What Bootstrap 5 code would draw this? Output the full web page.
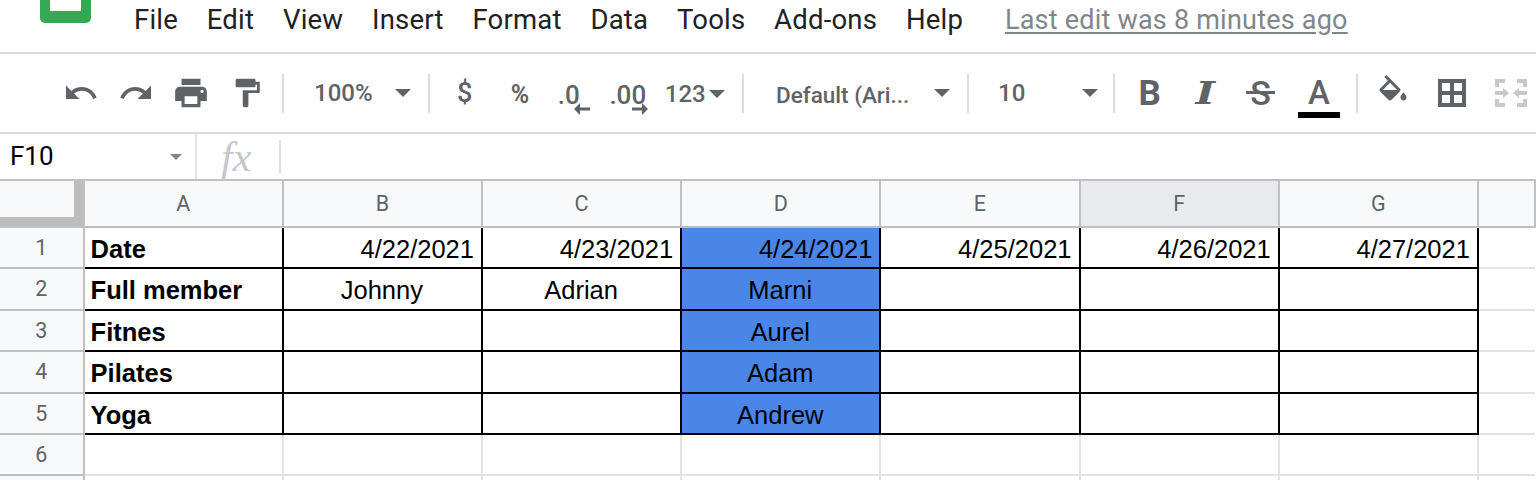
<!DOCTYPE html>
<html lang="en">
<head>
  <meta charset="UTF-8">
  <meta name="viewport" content="width=device-width, initial-scale=1.0">
  <title>Schedule - Google Sheets</title>
  <link href="https://cdn.jsdelivr.net/npm/bootstrap@5.3.3/dist/css/bootstrap.min.css" rel="stylesheet">
  <style>
    html, body { height: 481px; overflow: hidden; background: #fff; }
    body { font-family: Roboto, "Liberation Sans", sans-serif; color: #202124; }

    /* menu bar */
    .menu-bar { height: 54px; border-bottom: 2px solid #dadce0; overflow: hidden; }
    .sheet-logo { width: 51px; height: 50px; margin: -27px 0 0 40px; background: #34a853; border-radius: 5px; padding: 0 10px; flex: none; }
    .sheet-logo i { display: block; height: 38px; background: #fff; }
    .menu-items { margin-left: 43px; gap: 28.8px; font-size: 27.5px; line-height: 40px; letter-spacing: .2px; white-space: nowrap; }
    .last-edit { color: #80868b; font-size: 27px; text-decoration: underline; text-underline-offset: 3px; margin-left: 13px; letter-spacing: .22px; }

    /* toolbar */
    .tool-bar { height: 80px; padding-left: 53px; border-bottom: 2px solid #dadce0; color: #5f6368; overflow: hidden; }
    .tool-btn { width: 55.4px; height: 40px; flex: none; display: flex; align-items: center; justify-content: center; }
    .tool-sep { width: 2px; height: 39px; background: #dadce0; flex: none; }
    .tool-sec { flex: none; height: 40px; display: flex; align-items: center; }
    .sec-history { width: 229px; }
    .sec-zoom { width: 144px; padding: 0 17px 0 30px; justify-content: space-between; }
    .sec-number { width: 312px; padding-left: 7px; }
    .sec-font { width: 223px; padding: 0 17px 0 32px; justify-content: space-between; }
    .sec-size { width: 144px; padding: 0 15px 0 29px; justify-content: space-between; }
    .sec-style { width: 241px; padding-left: 7px; }
    .sec-cell { padding-left: 7px; }
    .tool-text { font-size: 24px; font-weight: 500; line-height: 1; white-space: nowrap; }
    .caret-down { width: 0; height: 0; border: 8px solid transparent; border-top-color: #5f6368; border-bottom: 0; flex: none; }
    .glyph-dollar { font-size: 27px; }
    .glyph-percent { font-size: 25px; font-weight: 700; margin-top: 2px; }
    .decimal-btn { position: relative; }
    .decimal-btn .tool-text { font-size: 26px; margin-top: 4px; }
    .decimal-btn svg { position: absolute; }
    .arrow-less { right: 4px; bottom: -2px; }
    .arrow-more { right: 14px; bottom: -2px; }
    .sec-number .tool-btn:nth-child(3) { width: 50px; margin-left: -4px; }
    .sec-number .tool-btn:nth-child(4) { width: 68px; }
    .num-fmt { padding-left: 3px; gap: 3px; justify-content: flex-start; margin-top: 2px; }
    .font-name { font-size: 22.5px; margin-top: 4px; }
    .glyph-bold { font-size: 35px; font-weight: 700; }
    .glyph-italic { font-family: "DejaVu Serif", serif; font-size: 31px; font-weight: 700; font-style: italic; transform: scaleX(1.35); }
    .glyph-strike { font-size: 34px; font-weight: 500; position: relative; }
    .glyph-strike::after { content: ""; position: absolute; left: -4px; right: -4px; top: 15px; height: 3px; background: #5f6368; }
    .color-a { display: flex; flex-direction: column; align-items: center; margin: 10px 0 0 3px; }
    .color-a span { font-size: 33px; line-height: 30px; font-weight: 500; }
    .color-a i { display: block; width: 42px; height: 8px; background: #000; margin-top: 4px; }

    /* formula bar */
    .formula-bar { height: 47px; border-bottom: 2px solid #c0c0c0; }
    .name-box { width: 197px; height: 100%; padding: 0 13px 0 10px; border-right: 2px solid #e3e4e6; font-size: 26px; color: #000; flex: none; }
    .name-box .caret-down { border-width: 6px; border-bottom: 0; border-top-color: #80868b; }
    .fx-label { width: 82px; flex: none; padding-left: 24px; font-family: "Liberation Serif", serif; font-style: italic; font-size: 42px; line-height: 44px; color: #c4c7cb; }
    .fx-sep { width: 2px; height: 33px; flex: none; background: #dadce0; }

    /* grid */
    .sheet-grid { table-layout: fixed; width: 1536px; border-collapse: collapse; font-family: "Liberation Sans", Arial, sans-serif; font-size: 25.5px; color: #000; }
    .sheet-grid col.row-col { width: 83.6px; }
    .sheet-grid col.data-col { width: 199.2px; }
    .sheet-grid col.rest-col { width: auto; }
    .sheet-grid th, .sheet-grid td { height: 41.4px; padding: 4px 7px 0 6px; line-height: 1; border: 2px solid #e2e3e3; white-space: nowrap; overflow: hidden; }
    .sheet-grid thead th { height: 46px; padding: 0; background: #f8f9fa; border: 2px solid #c0c0c0; border-top: 0; font-family: Roboto, sans-serif; font-weight: 400; font-size: 21.5px; color: #5f6368; text-align: center; }
    .sheet-grid thead th.col-active { background: #e8eaed; }
    .sheet-grid thead th.col-corner { position: relative; border-left: 0; }
    .col-corner::after { content: ""; position: absolute; right: 0; bottom: 0; width: 100%; height: 100%; border-right: 9px solid #bdbdbd; border-bottom: 9px solid #bdbdbd; }
    .sheet-grid tbody th { padding: 0; background: #f8f9fa; border: 2px solid #c0c0c0; border-left: 0; font-family: Roboto, sans-serif; font-weight: 400; font-size: 21.5px; color: #5f6368; text-align: center; }
    .sheet-grid td.cell-box { border-color: #000; }
    .sheet-grid td.cell-head { font-weight: 700; }
    .sheet-grid td.cell-date { text-align: right; }
    .sheet-grid td.cell-name { text-align: center; }
    .sheet-grid td.cell-blue { background: #4a86e8; }
    .sheet-grid td.cell-rest { border-left: 0; border-right: 0; }
    .sheet-grid .row-sliver th, .sheet-grid .row-sliver td { height: 5px; padding: 0; border-bottom: 0; }
  </style>
</head>
<body>

  <!-- Menu bar -->
  <div class="menu-bar d-flex align-items-start">
    <div class="sheet-logo"><i></i></div>
    <div class="menu-items d-flex">
      <span>File</span><span>Edit</span><span>View</span><span>Insert</span><span>Format</span><span>Data</span><span>Tools</span><span>Add-ons</span><span>Help</span>
      <span class="last-edit">Last edit was 8 minutes ago</span>
    </div>
  </div>

  <!-- Toolbar -->
  <div class="tool-bar d-flex align-items-center">
    <div class="tool-sec sec-history">
      <div class="tool-btn"><svg width="36" height="36" viewBox="0 0 24 24" fill="#5f6368"><path d="M12.5 8c-2.65 0-5.05.99-6.9 2.6L2 7v9h9l-3.62-3.62c1.39-1.16 3.16-1.88 5.12-1.88 3.54 0 6.55 2.31 7.6 5.5l2.37-.78C21.08 11.03 17.15 8 12.5 8z"/></svg></div>
      <div class="tool-btn"><svg width="36" height="36" viewBox="0 0 24 24" fill="#5f6368"><path d="M18.4 10.6C16.55 8.99 14.15 8 11.5 8c-4.65 0-8.58 3.03-9.96 7.22L3.9 16c1.05-3.19 4.05-5.5 7.6-5.5 1.95 0 3.73.72 5.12 1.88L13 16h9V7l-3.6 3.6z"/></svg></div>
      <div class="tool-btn"><svg width="38" height="38" viewBox="0 0 24 24" fill="#5f6368"><path d="M19 8H5c-1.66 0-3 1.34-3 3v6h4v4h12v-4h4v-6c0-1.66-1.34-3-3-3zm-3 11H8v-5h8v5zm3-7c-.55 0-1-.45-1-1s.45-1 1-1 1 .45 1 1-.45 1-1 1zm-1-9H6v4h12V3z"/></svg></div>
      <div class="tool-btn"><svg width="34" height="34" viewBox="0 0 24 24" fill="#5f6368"><path d="M18 4V3c0-.55-.45-1-1-1H5c-.55 0-1 .45-1 1v4c0 .55.45 1 1 1h12c.55 0 1-.45 1-1V6h1v4H9v11c0 .55.45 1 1 1h2c.55 0 1-.45 1-1v-9h8V4h-3z"/></svg></div>
    </div>
    <div class="tool-sep"></div>
    <div class="tool-sec sec-zoom"><span class="tool-text">100%</span><span class="caret-down"></span></div>
    <div class="tool-sep"></div>
    <div class="tool-sec sec-number">
      <div class="tool-btn"><span class="tool-text glyph-dollar">$</span></div>
      <div class="tool-btn"><span class="tool-text glyph-percent">%</span></div>
      <div class="tool-btn decimal-btn"><span class="tool-text">.0</span>
        <svg class="arrow-less" width="16" height="12" viewBox="0 0 16 12" fill="#5f6368"><path d="M0 6 6 0v4.500h10v3H6V12z"/></svg></div>
      <div class="tool-btn decimal-btn"><span class="tool-text">.00</span>
        <svg class="arrow-more" width="16" height="12" viewBox="0 0 16 12" fill="#5f6368"><path d="M16 6 10 0v4.500H0v3h10V12z"/></svg></div>
      <div class="tool-btn num-fmt"><span class="tool-text">123</span><span class="caret-down"></span></div>
    </div>
    <div class="tool-sep"></div>
    <div class="tool-sec sec-font"><span class="tool-text font-name">Default (Ari...</span><span class="caret-down"></span></div>
    <div class="tool-sep"></div>
    <div class="tool-sec sec-size"><span class="tool-text">10</span><span class="caret-down"></span></div>
    <div class="tool-sep"></div>
    <div class="tool-sec sec-style">
      <div class="tool-btn"><span class="tool-text glyph-bold">B</span></div>
      <div class="tool-btn"><span class="tool-text glyph-italic">I</span></div>
      <div class="tool-btn"><span class="tool-text glyph-strike">S</span></div>
      <div class="tool-btn color-a"><span>A</span><i></i></div>
    </div>
    <div class="tool-sep"></div>
    <div class="tool-sec sec-cell">
      <div class="tool-btn"><svg width="36" height="36" viewBox="0 0 24 24" fill="#5f6368"><path d="M16.560 8.940 7.620 0 6.210 1.410l2.380 2.380-5.150 5.150c-.59.59-.59 1.540 0 2.120l5.500 5.500c.29.29.68.44 1.060.44s.77-.15 1.060-.44l5.500-5.500c.59-.58.59-1.530 0-2.120zM5.210 10 10 5.210 14.790 10H5.210zM19 11.500s-2 2.170-2 3.500c0 1.100.9 2 2 2s2-.9 2-2c0-1.330-2-3.500-2-3.500z"/></svg></div>
      <div class="tool-btn ms-1"><svg width="28" height="28" viewBox="0 0 14 14" fill="#5f6368"><path d="M0 0v14h14V0zm6 12H2V8h4zm0-6H2V2h4zm6 6H8V8h4zm0-6H8V2h4z"/></svg></div>
      <div class="tool-btn ms-1"><svg width="32" height="28" viewBox="0 0 16 14" fill="#c6c8cb"><path d="M0 0h5v2H2v2H0zM11 0h5v4h-2V2h-3zM0 10h2v2h3v2H0zM14 10h2v4h-5v-2h3zM0 6h4V4.500L7 7l-3 2.500V8H0zM16 6h-4V4.500L9 7l3 2.500V8h4z"/></svg></div>
    </div>
  </div>

  <!-- Formula bar -->
  <div class="formula-bar d-flex align-items-center">
    <div class="name-box d-flex align-items-center justify-content-between"><span>F10</span><span class="caret-down"></span></div>
    <div class="fx-label">fx</div>
    <div class="fx-sep"></div>
  </div>

  <!-- Sheet -->
  <table class="sheet-grid">
    <colgroup>
      <col class="row-col"><col class="data-col"><col class="data-col"><col class="data-col"><col class="data-col"><col class="data-col"><col class="data-col"><col class="data-col"><col class="rest-col">
    </colgroup>
    <thead>
      <tr><th class="col-corner"></th><th>A</th><th>B</th><th>C</th><th>D</th><th>E</th><th class="col-active">F</th><th>G</th><th></th></tr>
    </thead>
    <tbody>
      <tr><th>1</th><td class="cell-box cell-head">Date</td><td class="cell-box cell-date">4/22/2021</td><td class="cell-box cell-date">4/23/2021</td><td class="cell-box cell-date cell-blue">4/24/2021</td><td class="cell-box cell-date">4/25/2021</td><td class="cell-box cell-date">4/26/2021</td><td class="cell-box cell-date">4/27/2021</td><td class="cell-rest"></td></tr>
      <tr><th>2</th><td class="cell-box cell-head">Full member</td><td class="cell-box cell-name">Johnny</td><td class="cell-box cell-name">Adrian</td><td class="cell-box cell-name cell-blue">Marni</td><td class="cell-box"></td><td class="cell-box"></td><td class="cell-box"></td><td class="cell-rest"></td></tr>
      <tr><th>3</th><td class="cell-box cell-head">Fitnes</td><td class="cell-box"></td><td class="cell-box"></td><td class="cell-box cell-name cell-blue">Aurel</td><td class="cell-box"></td><td class="cell-box"></td><td class="cell-box"></td><td class="cell-rest"></td></tr>
      <tr><th>4</th><td class="cell-box cell-head">Pilates</td><td class="cell-box"></td><td class="cell-box"></td><td class="cell-box cell-name cell-blue">Adam</td><td class="cell-box"></td><td class="cell-box"></td><td class="cell-box"></td><td class="cell-rest"></td></tr>
      <tr><th>5</th><td class="cell-box cell-head">Yoga</td><td class="cell-box"></td><td class="cell-box"></td><td class="cell-box cell-name cell-blue">Andrew</td><td class="cell-box"></td><td class="cell-box"></td><td class="cell-box"></td><td class="cell-rest"></td></tr>
      <tr><th>6</th><td></td><td></td><td></td><td></td><td></td><td></td><td></td><td class="cell-rest"></td></tr>
      <tr class="row-sliver"><th></th><td></td><td></td><td></td><td></td><td></td><td></td><td></td><td class="cell-rest"></td></tr>
    </tbody>
  </table>

  <script src="https://cdn.jsdelivr.net/npm/bootstrap@5.3.3/dist/js/bootstrap.bundle.min.js"></script>
</body>
</html>
